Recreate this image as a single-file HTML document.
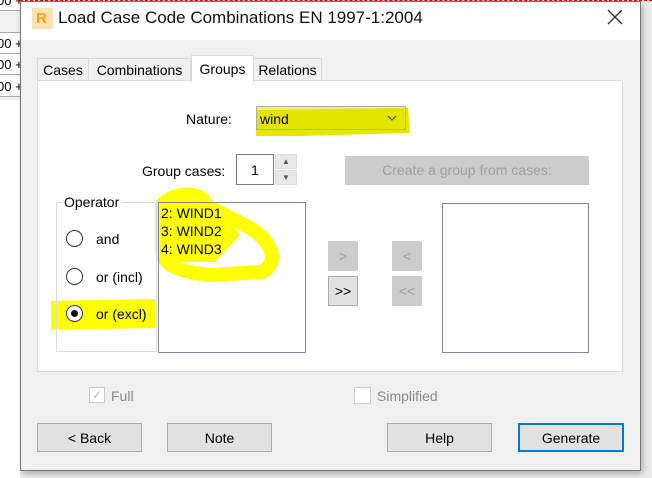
<!DOCTYPE html>
<html><head><style>
*{box-sizing:border-box;margin:0;padding:0}
body{width:652px;height:478px;position:relative;overflow:hidden;background:#ececec;font-family:"Liberation Sans",sans-serif;font-size:14px;color:#000}
.a{position:absolute}
.cell{position:absolute;left:0;width:20px;height:21px;border-bottom:1px solid #aaa;background:#fff;font-size:13px;line-height:21px;white-space:nowrap;overflow:hidden;text-indent:-3px}
.btn{position:absolute;background:#e1e1e1;border:1px solid #adadad;text-align:center;font-size:14px}
.dis{background:#cccccc;border:1px solid #cccccc;color:#a0a0a0}
.radio{position:absolute;width:17px;height:17px;border:1px solid #333;border-radius:50%;background:#fff}
</style></head><body>
<div class="a" style="left:0;top:0;width:20px;height:100px;background:#f0f0f0"></div>
<div class="cell" style="top:-10px">00 +</div>
<div class="cell" style="top:12px;background:#f0f0f0"></div>
<div class="cell" style="top:33px">00 +</div>
<div class="cell" style="top:54px">00 +</div>
<div class="cell" style="top:76px">00 +</div>
<div class="a" style="left:0;top:100px;width:20px;height:378px;background:#fff"></div>
<div class="a" style="left:20px;top:0;width:632px;height:1px;border-top:1px dashed #e00"></div>
<!-- dialog -->
<div class="a" style="left:20px;top:1px;width:621px;height:470px;background:#f0f0f0;border:1px solid #777;box-shadow:2px 3px 6px rgba(0,0,0,.25)"></div>
<div class="a" style="left:21px;top:2px;width:619px;height:38px;background:#fff"></div>
<div class="a" style="left:32px;top:8px;width:21px;height:21px;background:#fde3b0;color:#f0a020;font-weight:bold;font-size:15px;line-height:21px;text-indent:4px">R</div>
<div class="a" style="left:58px;top:8px;font-size:17px;color:#111">Load Case Code Combinations EN 1997-1:2004</div>
<svg class="a" style="left:607px;top:9px" width="16" height="16"><path d="M1 1L15 15M15 1L1 15" stroke="#333" stroke-width="1.3"/></svg>
<!-- tabs -->
<div class="a" style="left:37px;top:58px;width:52px;height:23px;border:1px solid #d9d9d9;background:#f0f0f0;font-size:14px;text-align:center;line-height:22px">Cases</div>
<div class="a" style="left:88px;top:58px;width:103px;height:23px;border:1px solid #d9d9d9;background:#f0f0f0;text-align:center;line-height:22px">Combinations</div>
<div class="a" style="left:253px;top:58px;width:69px;height:23px;border:1px solid #d9d9d9;background:#f0f0f0;text-align:center;line-height:22px">Relations</div>
<div class="a" style="left:37px;top:80px;width:586px;height:292px;background:#fff;border:1px solid #dcdcdc"></div>
<div class="a" style="left:191px;top:55px;width:63px;height:27px;border:1px solid #d9d9d9;border-bottom:none;background:#fff;text-align:center;line-height:26px">Groups</div>
<!-- highlights -->
<svg class="a" style="left:0;top:0" width="652" height="478">
<path d="M256 110 L408 108 L410 133 L300 136 L256 136 Z" fill="#e6e600"/>
<path d="M162 205 C175 190 205 192 205 205 L250 228 C272 242 280 262 262 272 L210 275 C180 272 162 265 162 250 Z" fill="none" stroke="#ffff00" stroke-width="14" stroke-linejoin="round"/>
<path d="M158 198 L210 198 L240 235 L215 262 L160 262 Z" fill="#ffff00"/>
<rect x="51" y="300" width="104" height="29" fill="#ffff00" transform="rotate(-1 100 315)"/>
</svg>
<div class="a" style="left:186px;top:111px">Nature:</div>
<div class="a" style="left:256px;top:106px;width:150px;height:24px;border:1px solid #adadad;background:rgba(225,225,0,.5)"></div>
<div class="a" style="left:260px;top:111px">wind</div>
<svg class="a" style="left:387px;top:115px" width="10" height="6"><path d="M1 1L5 5L9 1" stroke="#444" fill="none"/></svg>
<div class="a" style="left:142px;top:163px">Group cases:</div>
<div class="a" style="left:236px;top:154px;width:38px;height:31px;border:1px solid #7a7a7a;background:#fff;padding:7px 0 0 14px">1</div>
<div class="a" style="left:275px;top:154px;width:22px;height:15px;background:#e8e8e8;border:1px solid #ddd;font-size:8px;text-align:center;color:#555;line-height:14px">▲</div>
<div class="a" style="left:275px;top:170px;width:22px;height:15px;background:#e8e8e8;border:1px solid #ddd;font-size:8px;text-align:center;color:#555;line-height:14px">▼</div>
<div class="btn dis" style="left:345px;top:156px;width:244px;height:29px;line-height:27px">Create a group from cases:</div>
<!-- operator -->
<div class="a" style="left:56px;top:202px;width:101px;height:150px;border:1px solid #dcdcdc"></div>
<div class="a" style="left:62px;top:194px;background:#fff;padding:0 2px">Operator</div>
<div class="radio" style="left:66px;top:230px"></div><div class="a" style="left:96px;top:231px">and</div>
<div class="radio" style="left:66px;top:268px"></div><div class="a" style="left:96px;top:269px">or (incl)</div>
<div class="radio" style="left:66px;top:305px"></div><div class="a" style="left:71px;top:310px;width:7px;height:7px;border-radius:50%;background:#111"></div>
<div class="a" style="left:96px;top:306px;width:51px;overflow:hidden;white-space:nowrap">or (excl)</div>
<!-- lists -->
<div class="a" style="left:158px;top:202px;width:148px;height:151px;border:1px solid #828790"></div>
<div class="a" style="left:161px;top:204px;line-height:18px">2: WIND1<br>3: WIND2<br>4: WIND3</div>
<div class="btn dis" style="left:328px;top:241px;width:30px;height:30px;line-height:28px">&gt;</div>
<div class="btn" style="left:328px;top:276px;width:30px;height:30px;line-height:28px">&gt;&gt;</div>
<div class="btn dis" style="left:392px;top:241px;width:30px;height:30px;line-height:28px">&lt;</div>
<div class="btn dis" style="left:392px;top:276px;width:30px;height:30px;line-height:28px">&lt;&lt;</div>
<div class="a" style="left:442px;top:203px;width:147px;height:150px;border:1px solid #828790;background:#fff"></div>
<!-- bottom -->
<div class="a" style="left:89px;top:387px;width:16px;height:16px;border:1px solid #ccc;background:#fff;color:#bbb;font-size:12px;text-align:center;line-height:14px">✓</div>
<div class="a" style="left:111px;top:388px;color:#8a8a8a">Full</div>
<div class="a" style="left:354px;top:387px;width:17px;height:17px;border:1px solid #ccc;background:#fff"></div>
<div class="a" style="left:377px;top:388px;color:#8a8a8a">Simplified</div>
<div class="btn" style="left:37px;top:423px;width:105px;height:29px;line-height:29px">&lt; Back</div>
<div class="btn" style="left:167px;top:423px;width:105px;height:29px;line-height:29px">Note</div>
<div class="btn" style="left:387px;top:423px;width:105px;height:29px;line-height:29px">Help</div>
<div class="btn" style="left:518px;top:423px;width:106px;height:29px;line-height:27px;border:2px solid #0078d7">Generate</div>
</body></html>
